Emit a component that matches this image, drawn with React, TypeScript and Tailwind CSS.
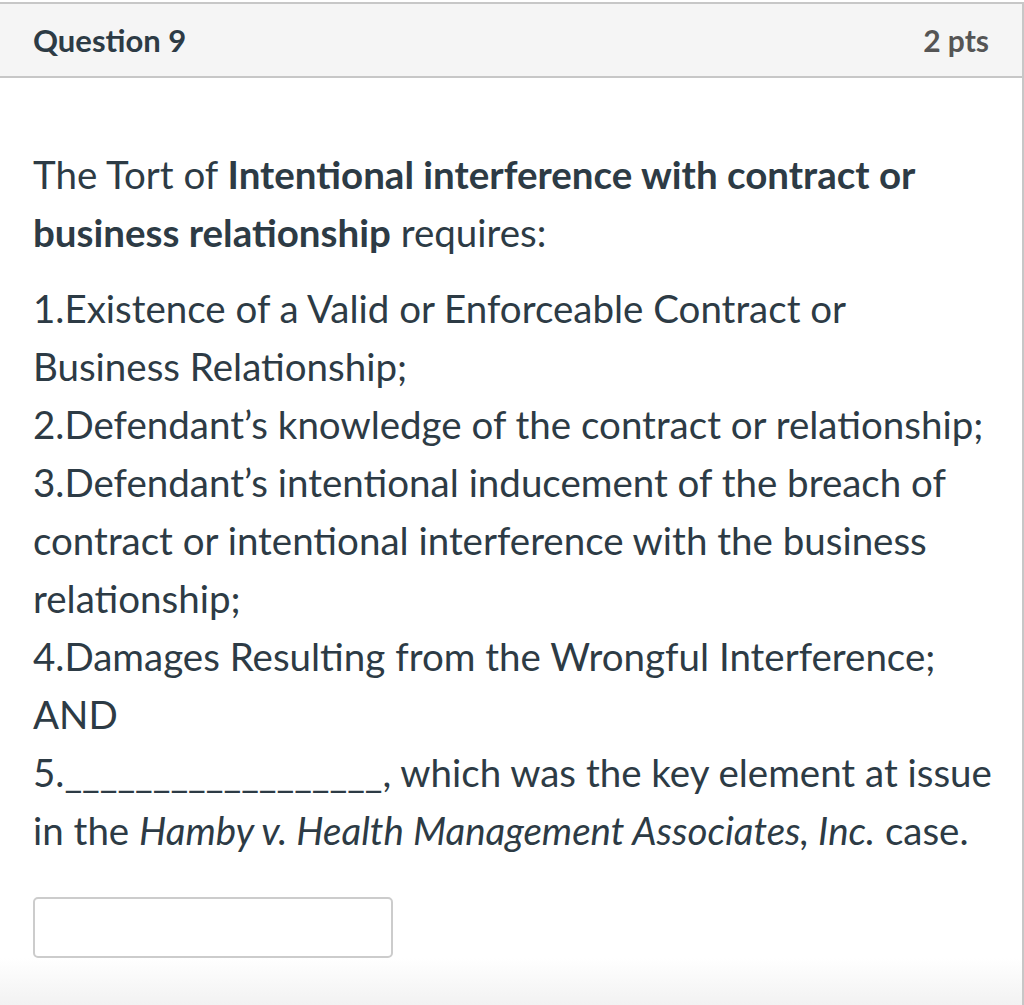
import React from "react";

export default function App() {
  return (
    <div className="w-[1024px] h-[1005px] bg-white overflow-hidden pt-[2px]" style={{ fontFamily: "Lato, 'Open Sans', sans-serif" }}>
      <div className="border-t-2 border-r-2 border-[#c7c7c7] h-full flex flex-col">
        {/* Header */}
        <div className="h-[74px] shrink-0 bg-[#f5f5f5] border-b-2 border-[#c7c7c7] flex items-center justify-between pl-[33px] pr-[33px]">
          <h2 className="text-[31px] font-bold text-[#2d3b45]">Question 9</h2>
          <span className="text-[30px] font-bold text-[#555555]">2 pts</span>
        </div>

        {/* Body */}
        <div className="flex-1 pl-[33px] pr-[14px] pt-[67px] text-[38.5px] leading-[58px] text-[#2d3b45]">
          <p>
            The Tort of <strong className="font-bold">Intentional interference with contract or business relationship</strong> requires:
          </p>
          <p className="mt-[18px]">
            1.Existence of a Valid or Enforceable Contract or
            <br />
            Business Relationship;
            <br />
            2.Defendant’s knowledge of the contract or relationship;
            <br />
            3.Defendant’s intentional inducement of the breach of contract or intentional interference with the business relationship;
            <br />
            4.Damages Resulting from the Wrongful Interference;
            <br />
            AND
            <br />
            5.__________________, which was the key element at issue in the <em>Hamby v. Health Management Associates, Inc.</em> case.
          </p>
          <input
            type="text"
            className="mt-[38px] block w-[360px] h-[61px] border-2 border-[#cccccc] rounded-[5px] bg-white"
          />
        </div>

        {/* Footer */}
        <div className="h-[48px] shrink-0 bg-gradient-to-b from-white to-[#f2f2f2]" />
      </div>
    </div>
  );
}
